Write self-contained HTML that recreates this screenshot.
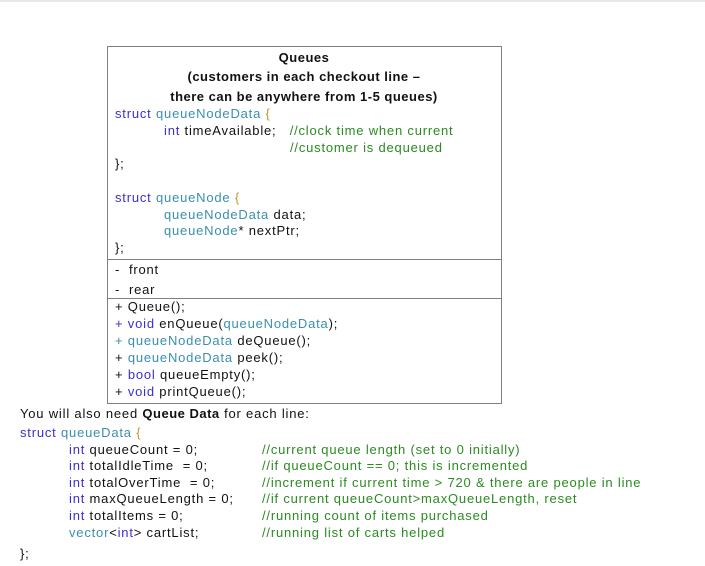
<!DOCTYPE html><html><head><style>
body{margin:0;width:705px;height:566px;background:#fff;position:relative;font-family:"Liberation Sans",sans-serif;font-size:13px;color:#111;overflow:hidden}
.t{position:absolute;white-space:pre;line-height:14px;letter-spacing:0.8px}
.k{color:#3a2fd0}.ty{color:#3a8fae}.c{color:#2b8a22}.b{color:#c9962a}
.box{position:absolute;left:107px;top:46px;width:393px;height:356px;border:1px solid #808080}
.hl{position:absolute;left:107px;width:394px;height:1px;background:#808080}
b{font-weight:bold;letter-spacing:0.5px}
</style></head><body>
<div style="position:absolute;left:0;top:0;width:705px;height:2px;background:#e8e8e8"></div>
<div class="box"></div>
<div class="hl" style="top:259px"></div>
<div class="hl" style="top:298px"></div>
<div class="t" style="left:107px;width:394px;text-align:center;top:51px"><b>Queues</b></div>
<div class="t" style="left:107px;width:394px;text-align:center;top:70px"><b>(customers in each checkout line –</b></div>
<div class="t" style="left:107px;width:394px;text-align:center;top:90px"><b>there can be anywhere from 1-5 queues)</b></div>
<div class="t" style="left:115px;top:107px"><span class="k">struct</span> <span class="ty">queueNodeData</span> <span class="b">{</span></div>
<div class="t" style="left:164px;top:124px"><span class="k">int</span> timeAvailable;   <span class="c">//clock time when current</span></div>
<div class="t" style="left:290px;top:141px"><span class="c">//customer is dequeued</span></div>
<div class="t" style="left:115px;top:157px">};</div>
<div class="t" style="left:115px;top:191px"><span class="k">struct</span> <span class="ty">queueNode</span> <span class="b">{</span></div>
<div class="t" style="left:164px;top:208px"><span class="ty">queueNodeData</span> data;</div>
<div class="t" style="left:164px;top:224px"><span class="ty">queueNode</span>* nextPtr;</div>
<div class="t" style="left:115px;top:241px">};</div>
<div class="t" style="left:115px;top:263px">-  front</div>
<div class="t" style="left:115px;top:283px">-  rear</div>
<div class="t" style="left:115px;top:300px">+ Queue();</div>
<div class="t" style="left:115px;top:317px"><span class="k">+ void</span> enQueue(<span class="ty">queueNodeData</span>);</div>
<div class="t" style="left:115px;top:334px"><span class="ty">+ queueNodeData</span> deQueue();</div>
<div class="t" style="left:115px;top:351px">+ <span class="ty">queueNodeData</span> peek();</div>
<div class="t" style="left:115px;top:368px">+ <span class="k">bool</span> queueEmpty();</div>
<div class="t" style="left:115px;top:385px">+ <span class="k">void</span> printQueue();</div>
<div class="t" style="left:20px;top:407px">You will also need <b>Queue Data</b> for each line:</div>
<div class="t" style="left:20px;top:426px"><span class="k">struct</span> <span class="ty">queueData</span> <span class="b">{</span></div>
<div class="t" style="left:69px;top:443px"><span class="k">int</span> queueCount = 0;</div>
<div class="t" style="left:69px;top:459px"><span class="k">int</span> totalIdleTime  = 0;</div>
<div class="t" style="left:69px;top:476px"><span class="k">int</span> totalOverTime  = 0;</div>
<div class="t" style="left:69px;top:492px"><span class="k">int</span> maxQueueLength = 0;</div>
<div class="t" style="left:69px;top:509px"><span class="k">int</span> totalItems = 0;</div>
<div class="t" style="left:69px;top:526px"><span class="ty">vector</span>&lt;<span class="k">int</span>&gt; cartList;</div>
<div class="t c" style="left:262px;top:443px">//current queue length (set to 0 initially)</div>
<div class="t c" style="left:262px;top:459px">//if queueCount == 0; this is incremented</div>
<div class="t c" style="left:262px;top:476px">//increment if current time &gt; 720 &amp; there are people in line</div>
<div class="t c" style="left:262px;top:492px">//if current queueCount&gt;maxQueueLength, reset</div>
<div class="t c" style="left:262px;top:509px">//running count of items purchased</div>
<div class="t c" style="left:262px;top:526px">//running list of carts helped</div>
<div class="t" style="left:20px;top:547px">};</div>
</body></html>
